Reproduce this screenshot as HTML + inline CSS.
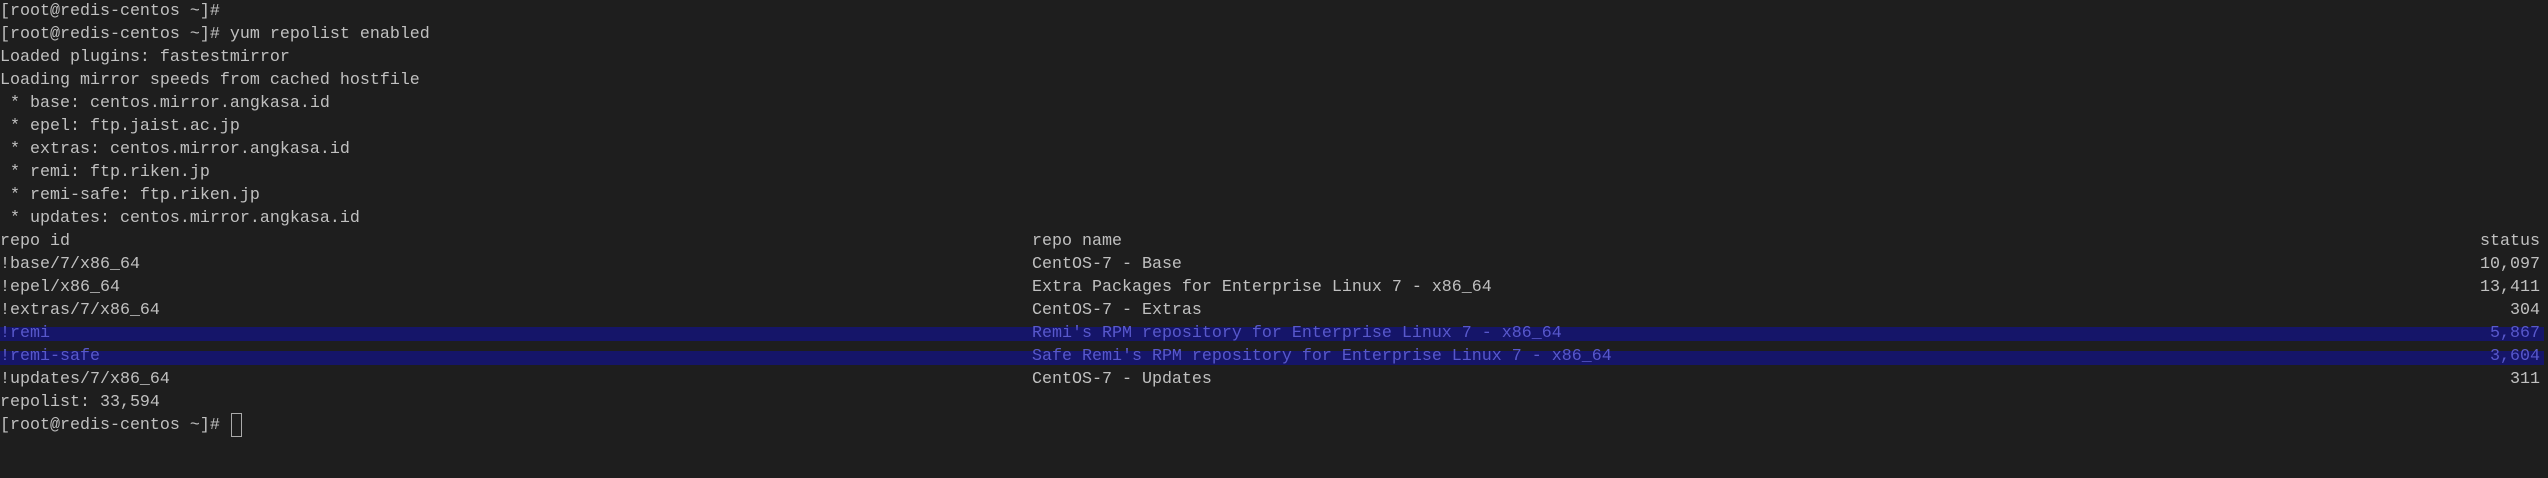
<!DOCTYPE html>
<html><head><style>
html,body{margin:0;padding:0;background:#1e1e1e;width:2548px;height:478px;overflow:hidden}
.t{position:relative;font-family:"Liberation Mono",monospace;font-size:16.67px;color:#c0c0c0}
.r{position:absolute;left:0;height:23px;line-height:23px;white-space:pre;width:2548px}
.c2{position:absolute;left:1032px;top:0}
.c3{position:absolute;right:8px;top:0}
.hl{position:absolute;left:0;width:2544px;top:5px;height:14px;background:#151569}
.hl2{color:#5858cc}
.cur{position:absolute;left:231px;top:413px;width:9px;height:22px;border:1px solid #aaa}
</style></head><body><div class="t">
<div class="r" style="top:0px">[root@redis-centos ~]#</div>
<div class="r" style="top:23px">[root@redis-centos ~]# yum repolist enabled</div>
<div class="r" style="top:46px">Loaded plugins: fastestmirror</div>
<div class="r" style="top:69px">Loading mirror speeds from cached hostfile</div>
<div class="r" style="top:92px"> * base: centos.mirror.angkasa.id</div>
<div class="r" style="top:115px"> * epel: ftp.jaist.ac.jp</div>
<div class="r" style="top:138px"> * extras: centos.mirror.angkasa.id</div>
<div class="r" style="top:161px"> * remi: ftp.riken.jp</div>
<div class="r" style="top:184px"> * remi-safe: ftp.riken.jp</div>
<div class="r" style="top:207px"> * updates: centos.mirror.angkasa.id</div>
<div class="r" style="top:230px">repo id<span class="c2">repo name</span><span class="c3">status</span></div>
<div class="r" style="top:253px">!base/7/x86_64<span class="c2">CentOS-7 - Base</span><span class="c3">10,097</span></div>
<div class="r" style="top:276px">!epel/x86_64<span class="c2">Extra Packages for Enterprise Linux 7 - x86_64</span><span class="c3">13,411</span></div>
<div class="r" style="top:299px">!extras/7/x86_64<span class="c2">CentOS-7 - Extras</span><span class="c3">304</span></div>
<div class="r hl2" style="top:322px"><div class="hl"></div><span style="position:relative">!remi</span><span class="c2">Remi's RPM repository for Enterprise Linux 7 - x86_64</span><span class="c3">5,867</span></div>
<div class="r hl2" style="top:345px"><div class="hl" style="top:6px"></div><span style="position:relative">!remi-safe</span><span class="c2">Safe Remi's RPM repository for Enterprise Linux 7 - x86_64</span><span class="c3">3,604</span></div>
<div class="r" style="top:368px">!updates/7/x86_64<span class="c2">CentOS-7 - Updates</span><span class="c3">311</span></div>
<div class="r" style="top:391px">repolist: 33,594</div>
<div class="r" style="top:414px">[root@redis-centos ~]#</div>
<div class="cur"></div>
</div></body></html>
